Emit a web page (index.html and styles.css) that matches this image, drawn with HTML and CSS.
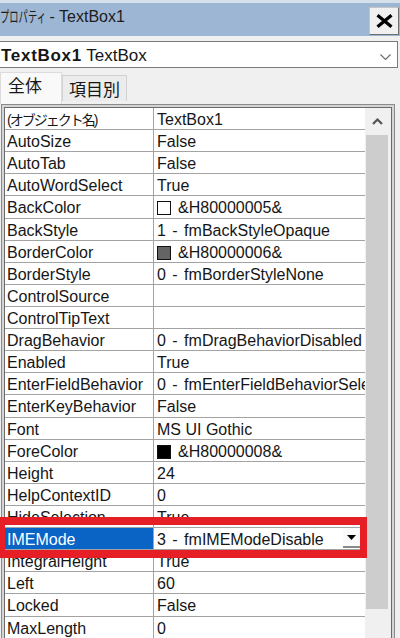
FILE: index.html
```html
<!DOCTYPE html>
<html lang="ja">
<head>
<meta charset="utf-8">
<title>プロパティ - TextBox1</title>
<link rel="stylesheet" href="styles.css">
</head>
<body>
<div class="titlebar">
  <div class="title"><span class="kana">プロパティ</span> - TextBox1</div>
  <div class="close"><svg width="17" height="14" viewBox="0 0 17 14"><path d="M1.5 1.2 L15.5 12.8 M15.5 1.2 L1.5 12.8" stroke="#000" stroke-width="3.2" fill="none"/></svg></div>
</div>
<div class="combo">
  <span class="combo-text"><b>TextBox1</b> TextBox</span>
  <svg class="chev" width="11" height="6" viewBox="0 0 11 6"><polyline points="0.5,0.5 5.5,5.5 10.5,0.5" stroke="#6a6a6a" stroke-width="1.1" fill="none"/></svg>
</div>
<div class="tabs">
  <div class="tab active">全体</div>
  <div class="tab">項目別</div>
</div>
<div class="frame">
  <div class="grid">
    <div class="rows">
      <div class="row"><div class="name"><span class="jp">(オブジェクト名)</span></div><div class="value">TextBox1</div></div>
      <div class="row"><div class="name">AutoSize</div><div class="value">False</div></div>
      <div class="row"><div class="name">AutoTab</div><div class="value">False</div></div>
      <div class="row"><div class="name">AutoWordSelect</div><div class="value">True</div></div>
      <div class="row"><div class="name">BackColor</div><div class="value"><span class="sw sw-white"></span>&amp;H80000005&amp;</div></div>
      <div class="row"><div class="name">BackStyle</div><div class="value enum">1 - fmBackStyleOpaque</div></div>
      <div class="row"><div class="name">BorderColor</div><div class="value"><span class="sw sw-grey"></span>&amp;H80000006&amp;</div></div>
      <div class="row"><div class="name">BorderStyle</div><div class="value enum">0 - fmBorderStyleNone</div></div>
      <div class="row"><div class="name">ControlSource</div><div class="value"></div></div>
      <div class="row"><div class="name">ControlTipText</div><div class="value"></div></div>
      <div class="row"><div class="name">DragBehavior</div><div class="value enum">0 - fmDragBehaviorDisabled</div></div>
      <div class="row"><div class="name">Enabled</div><div class="value">True</div></div>
      <div class="row"><div class="name">EnterFieldBehavior</div><div class="value enum">0 - fmEnterFieldBehaviorSelectAll</div></div>
      <div class="row"><div class="name">EnterKeyBehavior</div><div class="value">False</div></div>
      <div class="row"><div class="name">Font</div><div class="value">MS UI Gothic</div></div>
      <div class="row"><div class="name">ForeColor</div><div class="value"><span class="sw sw-black"></span>&amp;H80000008&amp;</div></div>
      <div class="row"><div class="name">Height</div><div class="value">24</div></div>
      <div class="row"><div class="name">HelpContextID</div><div class="value">0</div></div>
      <div class="row"><div class="name">HideSelection</div><div class="value">True</div></div>
      <div class="row selected"><div class="name">IMEMode</div><div class="value enum edit"><span>3 - fmIMEModeDisable</span><span class="dd"><svg width="9" height="5" viewBox="0 0 9 5"><polygon points="0,0 9,0 4.5,5" fill="#000"/></svg></span></div></div>
      <div class="row"><div class="name">IntegralHeight</div><div class="value">True</div></div>
      <div class="row"><div class="name">Left</div><div class="value">60</div></div>
      <div class="row"><div class="name">Locked</div><div class="value">False</div></div>
      <div class="row"><div class="name">MaxLength</div><div class="value">0</div></div>
    </div>
    <div class="scrollbar">
      <div class="sb-up"><svg width="11" height="7" viewBox="0 0 11 7"><polyline points="1,6 5.5,1.5 10,6" stroke="#555" stroke-width="2.2" fill="none"/></svg></div>
      <div class="sb-thumb"></div>
    </div>
  </div>
</div>
<div class="highlight"></div>
</body>
</html>
```

FILE: styles.css
```css
* { box-sizing: border-box; }
html, body { margin: 0; }
body {
  width: 400px;
  height: 638px;
  overflow: hidden;
  position: relative;
  background: #f0f0f0;
  font-family: "Liberation Sans", "Noto Sans CJK JP", sans-serif;
  font-size: 16px;
  color: #161616;
}

.titlebar {
  height: 36px;
  background: #9cb6d3;
  border-top: 3px solid #d6e0ea;
  display: flex;
  justify-content: space-between;
  align-items: flex-start;
}
.title {
  margin: 4px 0 0 0;
  line-height: 19px;
  white-space: nowrap;
  color: #1c1c1c;
}
.kana {
  display: inline-block;
  font-size: 15px;
  transform: scaleX(0.62);
  transform-origin: 0 50%;
  margin-right: -29px;
}
.close {
  width: 30px;
  height: 28px;
  margin: 4px 1px 0 0;
  background: #f0f0f0;
  border: 1px solid #c4c4c4;
  border-right-color: #707070;
  border-bottom-color: #707070;
  display: flex;
  align-items: center;
  justify-content: center;
}

.combo {
  height: 27px;
  margin: 5px 2px 0 0;
  background: #fff;
  border: 1px solid #7a7a7a;
  border-left: none;
  display: flex;
  align-items: center;
  justify-content: space-between;
  padding: 2px 6px 0 1px;
  font-size: 17px;
  white-space: nowrap;
}
.combo b { letter-spacing: 0.7px; }
.chev { margin-top: 2px; }

.tabs {
  display: flex;
  height: 32px;
  margin-top: 4px;
  align-items: flex-end;
  font-size: 17px;
}
.tab {
  width: 65px;
  height: 26px;
  margin-bottom: 3px;
  padding: 5px 0 0 6px;
  line-height: 20px;
  background: #ececec;
  border: 1px solid #d2d2d2;
  border-bottom: none;
}
.tab.active {
  width: 62px;
  height: 32px;
  margin-bottom: 0;
  padding: 4px 0 0 7px;
  background: #f9f9f9;
  border-color: #dcdcdc;
}

.frame {
  height: 540px;
  margin: 0 5px 0 1px;
  border: 1px solid #8a8a8a;
  padding: 2px;
  background: #d4d4d4;
}
.grid {
  height: 100%;
  border: 1px solid #6b6b6b;
  background: #f0f0f0;
  display: flex;
  align-items: stretch;
}
.rows {
  width: 360px;
  flex: none;
  background: #fff;
  align-self: flex-start;
}
.row {
  display: flex;
  height: 22.12px;
  border-bottom: 1px solid #a3a3a3;
}
.name {
  width: 149px;
  flex: none;
  padding: 2px 0 0 2px;
  line-height: 19px;
  border-right: 1px solid #a3a3a3;
  white-space: nowrap;
  overflow: hidden;
}
.jp { font-size: 14px; letter-spacing: -2px; }
.value {
  flex: 1;
  min-width: 0;
  padding: 2px 0 0 3px;
  line-height: 19px;
  white-space: nowrap;
  overflow: hidden;
  display: flex;
  align-items: flex-start;
}
.value.enum { word-spacing: 2px; }
.sw {
  width: 14px;
  height: 14px;
  flex: none;
  border: 1px solid #111;
  margin: 3px 7px 0 0;
}
.sw-white { background: #fff; }
.sw-grey { background: #646464; }
.sw-black { background: #000; }

.row.selected .name {
  background: #0964c6;
  color: #fff;
}
.dd {
  margin: -2px 5px 0 auto;
  width: 17px;
  height: 20px;
  flex: none;
  background: #fbfbfb;
  border-bottom: 2px solid #8a8a8a;
  display: flex;
  align-items: center;
  justify-content: center;
}

.scrollbar {
  width: 22px;
  flex: none;
  margin-left: 1px;
  display: flex;
  flex-direction: column;
  background: #f0f0f0;
}
.sb-up {
  height: 27px;
  display: flex;
  align-items: center;
  justify-content: center;
}
.sb-thumb {
  height: 474px;
  background: #cdcdcd;
}

.highlight {
  position: absolute;
  left: 0;
  top: 517px;
  width: 367px;
  height: 41px;
  border: solid #e61e26;
  border-width: 8px 7px 8px 5px;
}
```
